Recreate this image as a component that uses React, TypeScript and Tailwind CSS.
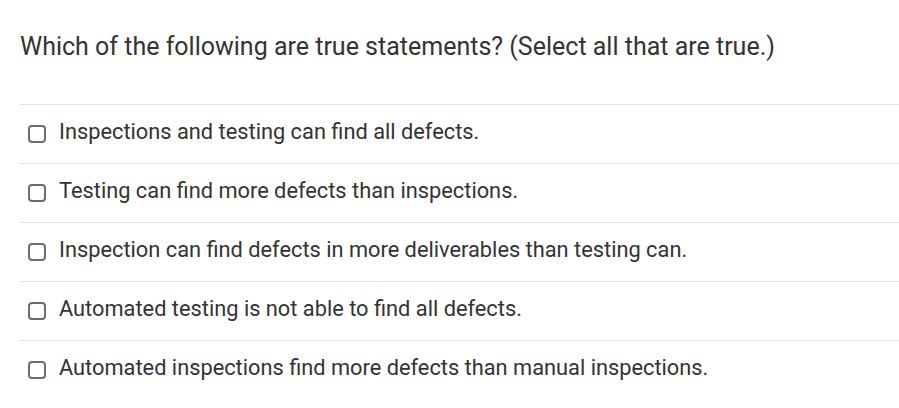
import React from 'react';

const options = [
  'Inspections and testing can find all defects.',
  'Testing can find more defects than inspections.',
  'Inspection can find defects in more deliverables than testing can.',
  'Automated testing is not able to find all defects.',
  'Automated inspections find more defects than manual inspections.',
];

export default function App() {
  return (
    <div className="min-h-screen bg-white pl-[20px] text-[#333333]" style={{ fontFamily: 'Roboto, "Noto Sans", sans-serif' }}>
      <h1 className="pt-[29px] text-[25px] leading-[36px] font-normal">
        Which of the following are true statements? (Select all that are true.)
      </h1>
      <ul className="mt-[39px]">
        {options.map((opt) => (
          <li key={opt} className="flex h-[59px] items-center gap-[13px] border-t border-[#e0e0e0] pl-[8px]">
            <span className="h-[18px] w-[18px] shrink-0 rounded-[4px] border-2 border-[#6e6e6e] bg-white" />
            <span className="-mt-[4px] text-[21.8px] leading-[28px]">{opt}</span>
          </li>
        ))}
      </ul>
    </div>
  );
}
